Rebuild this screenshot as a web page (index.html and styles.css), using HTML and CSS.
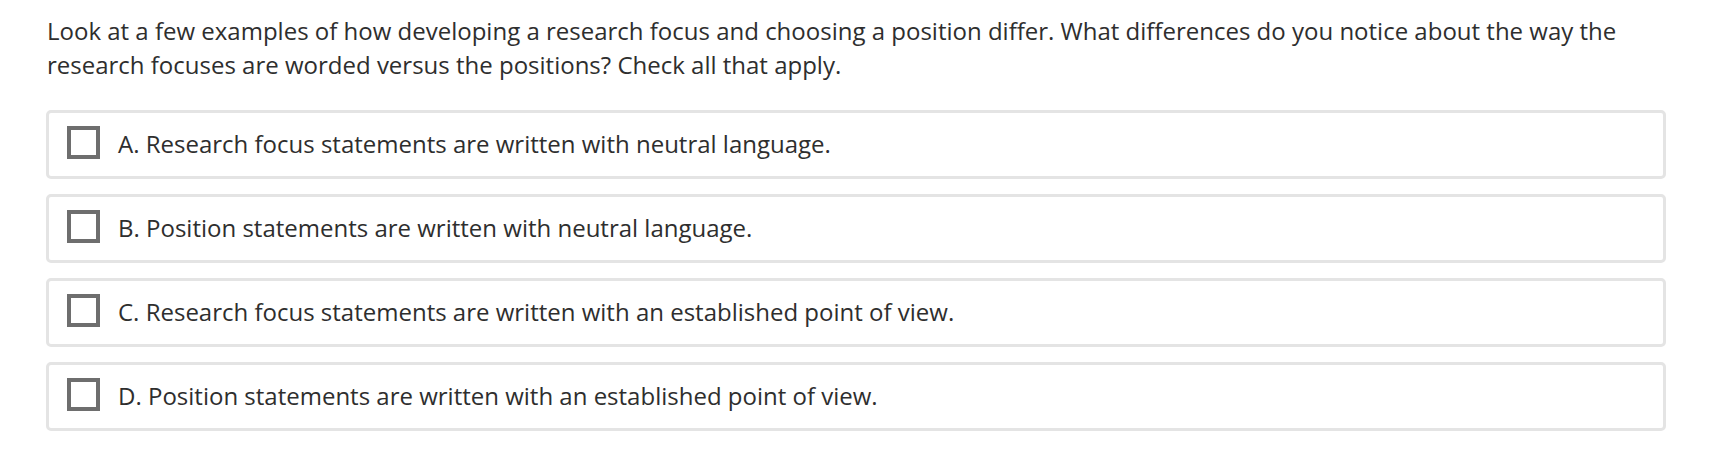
FILE: index.html
```html
<!DOCTYPE html>
<html lang="en">
<head>
<meta charset="utf-8">
<title>Question</title>
<link rel="stylesheet" href="styles.css">
</head>
<body>
<main class="question">
  <p class="prompt">Look at a few examples of how developing a research focus and choosing a position differ. What differences do you notice about the way the research focuses are worded versus the positions? Check all that apply.</p>
  <ul class="options">
    <li class="option"><span class="checkbox"></span><span class="label">A. Research focus statements are written with neutral language.</span></li>
    <li class="option"><span class="checkbox"></span><span class="label">B. Position statements are written with neutral language.</span></li>
    <li class="option"><span class="checkbox"></span><span class="label">C. Research focus statements are written with an established point of view.</span></li>
    <li class="option"><span class="checkbox"></span><span class="label">D. Position statements are written with an established point of view.</span></li>
  </ul>
</main>
</body>
</html>
```
FILE: styles.css
```css
html, body {
  margin: 0;
  padding: 0;
  background: #ffffff;
}
body {
  font-family: "Open Sans", "Noto Sans", "Liberation Sans", sans-serif;
  color: #2e2e2e;
  font-size: 24px;
}
.question {
  padding: 14px 0 0 46px;
  width: 1620px;
}
.prompt {
  margin: 0;
  padding-left: 1px;
  line-height: 34px;
  width: 1580px;
}
.options {
  list-style: none;
  margin: 28px 0 0 0;
  padding: 0;
  display: flex;
  flex-direction: column;
  gap: 15px;
}
.option {
  display: flex;
  align-items: flex-start;
  gap: 18px;
  border: 3px solid #e4e4e4;
  border-radius: 5px;
  padding: 13px 18px 17px 18px;
}
.checkbox {
  flex: none;
  width: 25px;
  height: 25px;
  border: 4px solid #6e6e6e;
}
.label {
  line-height: 30px;
  padding-top: 3px;
}
```
